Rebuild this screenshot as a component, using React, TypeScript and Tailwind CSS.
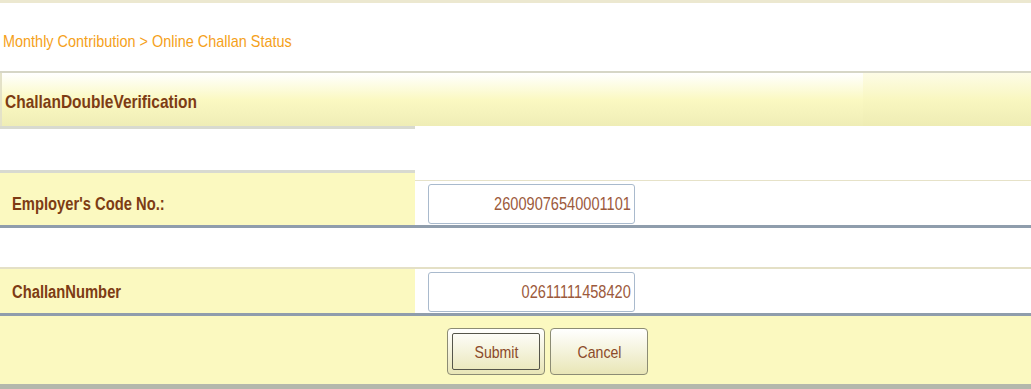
export default function App() {
  const font = { fontFamily: '"Liberation Sans", Arial, sans-serif' };

  return (
    <div className="w-[1031px] h-[389px] bg-white overflow-hidden" style={font}>
      <div className="border-t-[3px] border-[#ece8d0]" />

      {/* breadcrumb */}
      <div className="h-[68px] pt-[10px] pl-[3px] flex items-center text-[17px] text-[#f5a11a]">
        <span className="inline-block origin-left scale-x-[0.85] whitespace-nowrap">
          Monthly Contribution &gt; Online Challan Status
        </span>
      </div>

      <div className="h-[2px] bg-[#d6d6c6]" />

      {/* header */}
      <div className="h-[53px] flex">
        <div className="w-[863px] border-l-2 border-[#e4e2c8] pl-[3px] pt-[5px] flex items-center bg-gradient-to-b from-white via-[#fbf9c2] to-[#efedb6] text-[19px] font-bold text-[#7d3c14]">
          <span className="inline-block origin-left scale-x-[0.815] whitespace-nowrap">ChallanDoubleVerification</span>
        </div>
        <div className="flex-1 bg-gradient-to-b from-[#fdfce6] via-[#f9f7c0] to-[#eeecb4]" />
      </div>

      {/* spacer */}
      <div className="h-[47px] flex">
        <div className="w-[415px] border-t-[3px] border-b-[3px] border-[#d8dad0] bg-white" />
        <div className="flex-1" />
      </div>

      {/* employer's code */}
      <div className="h-[52px] flex">
        <div className="w-[415px] bg-[#fbf9c0] pl-[12px] pt-[10px] flex items-center text-[18px] font-bold text-[#7d3c14]">
          <span className="inline-block origin-left scale-x-[0.82] whitespace-nowrap">Employer's Code No.:</span>
        </div>
        <div className="flex-1 pt-[7px]">
          <div className="border-t border-[#e6e2c8] pl-[13px] pt-[3px]">
            <div className="w-[207px] h-[40px] border border-[#a9bacd] rounded-[3px] bg-white flex items-center justify-end pr-[3px] text-[18px] text-[#9c5a3c]">
              <span className="inline-block origin-right scale-x-[0.81] whitespace-nowrap">26009076540001101</span>
            </div>
          </div>
        </div>
      </div>
      <div className="h-[3px] bg-[#8f9dac]" />

      <div className="h-[39px]" />

      {/* challan number */}
      <div className="h-[2px] bg-[#e4e0c6]" />
      <div className="h-[44px] flex">
        <div className="w-[415px] bg-[#fbf9c0] pl-[12px] pt-[2px] flex items-center text-[18px] font-bold text-[#7d3c14]">
          <span className="inline-block origin-left scale-x-[0.82] whitespace-nowrap">ChallanNumber</span>
        </div>
        <div className="flex-1 pl-[13px] pt-[3px]">
          <div className="w-[207px] h-[40px] border border-[#a9bacd] rounded-[3px] bg-white flex items-center justify-end pr-[3px] text-[18px] text-[#9c5a3c]">
            <span className="inline-block origin-right scale-x-[0.81] whitespace-nowrap">02611111458420</span>
          </div>
        </div>
      </div>
      <div className="h-[3px] bg-[#8f9dac]" />

      {/* buttons */}
      <div className="h-[68px] bg-[#fbf9c0] flex items-center pl-[447px] gap-[5px] pt-[2px]">
        <button className="w-[98px] h-[47px] rounded-[4px] border border-[#8c8c74] bg-gradient-to-b from-white to-[#e9e6b6] p-[4px]">
          <span className="w-full h-full flex items-center justify-center pt-[4px] border border-[#55554a] rounded-[2px] text-[17px] text-[#8b4a2a]">
            <span className="inline-block scale-x-[0.83]">Submit</span>
          </span>
        </button>
        <button className="w-[98px] h-[47px] rounded-[4px] border border-[#8c8c74] bg-gradient-to-b from-white to-[#e9e6b6] flex items-center justify-center pt-[4px] text-[17px] text-[#8b4a2a]">
          <span className="inline-block scale-x-[0.83]">Cancel</span>
        </button>
      </div>
      <div className="h-[5px] bg-[#b4b8ac]" />
    </div>
  );
}
